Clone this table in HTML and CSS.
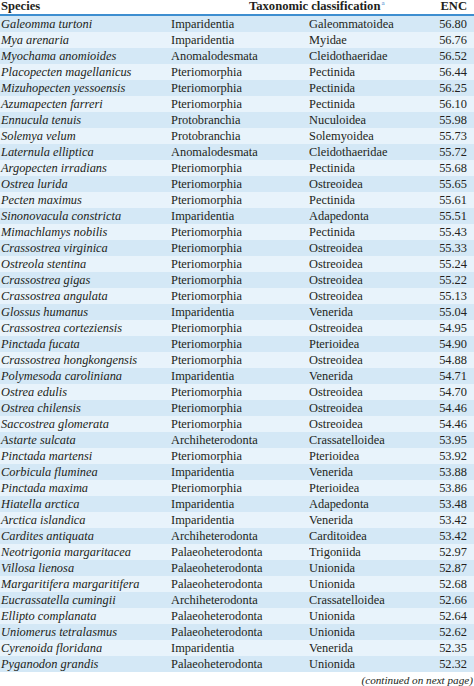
FILE: index.html
```html
<!DOCTYPE html>
<html>
<head>
<meta charset="utf-8">
<link rel="stylesheet" href="styles.css">
</head>
<body>
<table class="tbl">
<colgroup><col class="col1"><col class="col2"><col class="col3"><col class="col4"></colgroup>
<thead>
<tr><th class="c1">Species</th><th class="tax" colspan="2">Taxonomic classification<sup class="fn">a</sup></th><th class="enc">ENC</th></tr>
</thead>
<tbody>
<tr><td class="sp">Galeomma turtoni</td><td>Imparidentia</td><td>Galeommatoidea</td><td class="enc">56.80</td></tr>
<tr><td class="sp">Mya arenaria</td><td>Imparidentia</td><td>Myidae</td><td class="enc">56.76</td></tr>
<tr><td class="sp">Myochama anomioides</td><td>Anomalodesmata</td><td>Cleidothaeridae</td><td class="enc">56.52</td></tr>
<tr><td class="sp">Placopecten magellanicus</td><td>Pteriomorphia</td><td>Pectinida</td><td class="enc">56.44</td></tr>
<tr><td class="sp">Mizuhopecten yessoensis</td><td>Pteriomorphia</td><td>Pectinida</td><td class="enc">56.25</td></tr>
<tr><td class="sp">Azumapecten farreri</td><td>Pteriomorphia</td><td>Pectinida</td><td class="enc">56.10</td></tr>
<tr><td class="sp">Ennucula tenuis</td><td>Protobranchia</td><td>Nuculoidea</td><td class="enc">55.98</td></tr>
<tr><td class="sp">Solemya velum</td><td>Protobranchia</td><td>Solemyoidea</td><td class="enc">55.73</td></tr>
<tr><td class="sp">Laternula elliptica</td><td>Anomalodesmata</td><td>Cleidothaeridae</td><td class="enc">55.72</td></tr>
<tr><td class="sp">Argopecten irradians</td><td>Pteriomorphia</td><td>Pectinida</td><td class="enc">55.68</td></tr>
<tr><td class="sp">Ostrea lurida</td><td>Pteriomorphia</td><td>Ostreoidea</td><td class="enc">55.65</td></tr>
<tr><td class="sp">Pecten maximus</td><td>Pteriomorphia</td><td>Pectinida</td><td class="enc">55.61</td></tr>
<tr><td class="sp">Sinonovacula constricta</td><td>Imparidentia</td><td>Adapedonta</td><td class="enc">55.51</td></tr>
<tr><td class="sp">Mimachlamys nobilis</td><td>Pteriomorphia</td><td>Pectinida</td><td class="enc">55.43</td></tr>
<tr><td class="sp">Crassostrea virginica</td><td>Pteriomorphia</td><td>Ostreoidea</td><td class="enc">55.33</td></tr>
<tr><td class="sp">Ostreola stentina</td><td>Pteriomorphia</td><td>Ostreoidea</td><td class="enc">55.24</td></tr>
<tr><td class="sp">Crassostrea gigas</td><td>Pteriomorphia</td><td>Ostreoidea</td><td class="enc">55.22</td></tr>
<tr><td class="sp">Crassostrea angulata</td><td>Pteriomorphia</td><td>Ostreoidea</td><td class="enc">55.13</td></tr>
<tr><td class="sp">Glossus humanus</td><td>Imparidentia</td><td>Venerida</td><td class="enc">55.04</td></tr>
<tr><td class="sp">Crassostrea corteziensis</td><td>Pteriomorphia</td><td>Ostreoidea</td><td class="enc">54.95</td></tr>
<tr><td class="sp">Pinctada fucata</td><td>Pteriomorphia</td><td>Pterioidea</td><td class="enc">54.90</td></tr>
<tr><td class="sp">Crassostrea hongkongensis</td><td>Pteriomorphia</td><td>Ostreoidea</td><td class="enc">54.88</td></tr>
<tr><td class="sp">Polymesoda caroliniana</td><td>Imparidentia</td><td>Venerida</td><td class="enc">54.71</td></tr>
<tr><td class="sp">Ostrea edulis</td><td>Pteriomorphia</td><td>Ostreoidea</td><td class="enc">54.70</td></tr>
<tr><td class="sp">Ostrea chilensis</td><td>Pteriomorphia</td><td>Ostreoidea</td><td class="enc">54.46</td></tr>
<tr><td class="sp">Saccostrea glomerata</td><td>Pteriomorphia</td><td>Ostreoidea</td><td class="enc">54.46</td></tr>
<tr><td class="sp">Astarte sulcata</td><td>Archiheterodonta</td><td>Crassatelloidea</td><td class="enc">53.95</td></tr>
<tr><td class="sp">Pinctada martensi</td><td>Pteriomorphia</td><td>Pterioidea</td><td class="enc">53.92</td></tr>
<tr><td class="sp">Corbicula fluminea</td><td>Imparidentia</td><td>Venerida</td><td class="enc">53.88</td></tr>
<tr><td class="sp">Pinctada maxima</td><td>Pteriomorphia</td><td>Pterioidea</td><td class="enc">53.86</td></tr>
<tr><td class="sp">Hiatella arctica</td><td>Imparidentia</td><td>Adapedonta</td><td class="enc">53.48</td></tr>
<tr><td class="sp">Arctica islandica</td><td>Imparidentia</td><td>Venerida</td><td class="enc">53.42</td></tr>
<tr><td class="sp">Cardites antiquata</td><td>Archiheterodonta</td><td>Carditoidea</td><td class="enc">53.42</td></tr>
<tr><td class="sp">Neotrigonia margaritacea</td><td>Palaeoheterodonta</td><td>Trigoniida</td><td class="enc">52.97</td></tr>
<tr><td class="sp">Villosa lienosa</td><td>Palaeoheterodonta</td><td>Unionida</td><td class="enc">52.87</td></tr>
<tr><td class="sp">Margaritifera margaritifera</td><td>Palaeoheterodonta</td><td>Unionida</td><td class="enc">52.68</td></tr>
<tr><td class="sp">Eucrassatella cumingii</td><td>Archiheterodonta</td><td>Crassatelloidea</td><td class="enc">52.66</td></tr>
<tr><td class="sp">Ellipto complanata</td><td>Palaeoheterodonta</td><td>Unionida</td><td class="enc">52.64</td></tr>
<tr><td class="sp">Uniomerus tetralasmus</td><td>Palaeoheterodonta</td><td>Unionida</td><td class="enc">52.62</td></tr>
<tr><td class="sp">Cyrenoida floridana</td><td>Imparidentia</td><td>Venerida</td><td class="enc">52.35</td></tr>
<tr><td class="sp">Pyganodon grandis</td><td>Palaeoheterodonta</td><td>Unionida</td><td class="enc">52.32</td></tr>
</tbody>
</table>
<p class="cont">(continued on next page)</p>
</body>
</html>
```
FILE: styles.css
```css
html, body {
  margin: 0;
  padding: 0;
  background: #ffffff;
}
body {
  width: 474px;
  font-family: "Liberation Serif", "DejaVu Serif", serif;
  font-size: 12.4px;
  color: #231f20;
}
.tbl {
  width: 474px;
  border-collapse: collapse;
  table-layout: fixed;
}
.col1 { width: 171px; }
.col2 { width: 138px; }
.col3 { width: 98px; }
.col4 { width: 67px; }
.tbl th, .tbl td {
  padding: 0;
  white-space: nowrap;
  overflow: hidden;
}
.tbl thead th {
  height: 14px;
  line-height: 13px;
  font-size: 12.6px;
  font-weight: bold;
  text-align: left;
  vertical-align: top;
  border-bottom: 2px solid #3d8ed0;
}
.tbl th.c1 { padding-left: 1px; }
.tbl th.tax { padding-left: 78px; }
.tbl th.enc, .tbl td.enc { text-align: right; padding-right: 7px; }
.fn {
  color: #3d8ed0;
  font-size: 7px;
  font-weight: normal;
  vertical-align: top;
  line-height: 7px;
  margin-left: 1px;
}
.tbl tbody tr {
  height: 16px;
}
.tbl tbody td {
  height: 16px;
  line-height: 16px;
  vertical-align: middle;
}
.tbl tbody tr:nth-child(odd) { background: #d4e8f6; }
.tbl tbody tr:nth-child(even) { background: #e8f3fb; }
.tbl td.sp { font-style: italic; padding-left: 1px; }
.cont {
  margin: 1px 1px 0 0;
  text-align: right;
  font-style: italic;
  font-size: 11.2px;
  line-height: 14px;
}
```
